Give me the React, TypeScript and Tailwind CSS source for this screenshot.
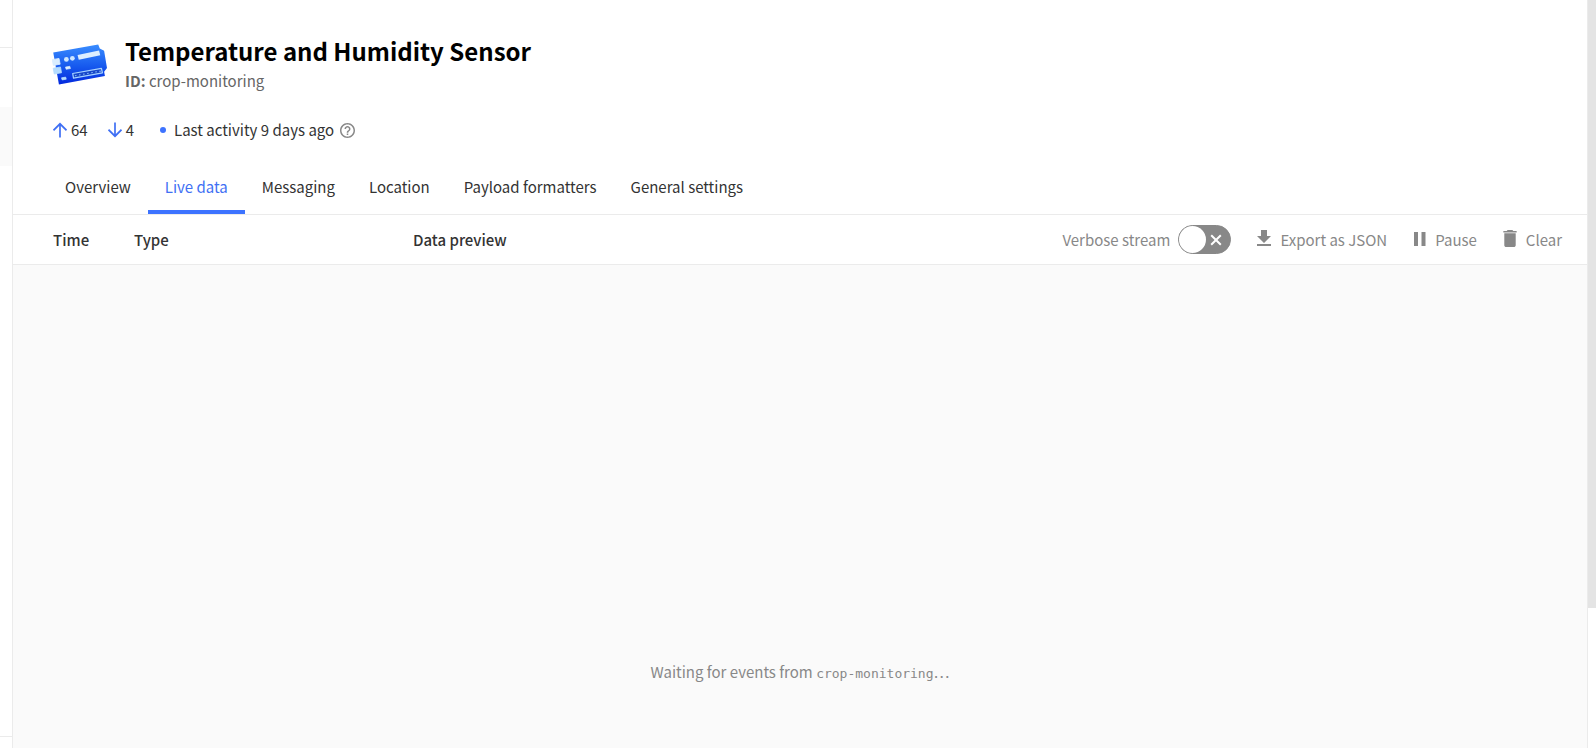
import React, { useState } from 'react';

const tabs = ['Overview', 'Live data', 'Messaging', 'Location', 'Payload formatters', 'General settings'];

function DeviceIcon() {
  return (
    <svg viewBox="0.800 0.500 53.200 39.200" className="h-[41px] w-[55px]" aria-hidden="true">
      <defs>
        <linearGradient id="board" x1="0" y1="0" x2="0" y2="1">
          <stop offset="0" stopColor="#3a8dff" />
          <stop offset="0.55" stopColor="#1659ee" />
          <stop offset="1" stopColor="#0328dd" />
        </linearGradient>
      </defs>
      <path d="M2 8.5 45.5 0.8 47 4.6 51.2 6.8 54 23.5 51.2 27.2 52 31.2 7.5 39.4z" fill="url(#board)" />
      <path d="M1 15.4l6.6-1.2 1.1 5.6L2.1 21z" fill="#d9edff" stroke="#d9edff" strokeWidth=".8" strokeLinejoin="round" />
      <path d="M2 23.7l7-1.2 1 5.600-7 1.2z" fill="#b4dcff" stroke="#b4dcff" strokeWidth=".8" strokeLinejoin="round" />
      <circle cx="14.7" cy="15.2" r="2.3" fill="#cde7ff" />
      <circle cx="20.5" cy="14.1" r="2.3" fill="#cde7ff" />
      <path d="M25.5 10.800l20.800-4.300 1.200 4.700-20.800 4.300z" fill="#dceeff" />
      <path d="M13.8 22.6l4.2-.8.7 2.2-4.2.8z" fill="#dceeff" stroke="#dceeff" strokeWidth=".6" />
      <path d="M10 33l4-.7.6 2-4 .7z" fill="#b4dcff" stroke="#b4dcff" strokeWidth=".7" />
      <path d="M20.8 28.8l27.8-4.9 1 4.2-28 5.1z" fill="#1747c9" stroke="#a6d2ff" strokeWidth="1.2" strokeLinejoin="round" />
      <path d="M23 31l25-4.5" stroke="#8bbcff" strokeWidth="1" strokeDasharray="1.5 2.5" />
    </svg>
  );
}

function ArrowIcon({ down = false }: { down?: boolean }) {
  return (
    <svg viewBox="0 0 14 16" className={down ? 'h-4 w-3.5 rotate-180' : 'h-4 w-3.5'} fill="none" stroke="#4070f4" strokeWidth="1.7" aria-hidden="true">
      <path d="M7 15.5V2M.5 8.300 7 1.8 13.500 8.300" />
    </svg>
  );
}

function Toggle() {
  const [on, setOn] = useState(false);
  return (
    <label className="flex items-center gap-2">
      Verbose stream
      <input type="checkbox" className="peer sr-only" checked={on} onChange={(e) => setOn(e.target.checked)} />
      <span className="flex h-[29px] w-[53px] items-center justify-between rounded-full border border-[#888] bg-[#888] pr-2 peer-checked:flex-row-reverse peer-checked:bg-[#3d73ff] peer-focus-visible:outline-2">
        <span className="size-[27px] rounded-full bg-white" />
        <svg viewBox="0 0 12 12" className="size-3" stroke="#fff" strokeWidth="2" aria-hidden="true">
          <path d="M1.2 1.2l9.6 9.6M10.8 1.2l-9.6 9.6" />
        </svg>
      </span>
    </label>
  );
}

export default function App() {
  const [active, setActive] = useState('Live data');
  return (
    <div className="flex h-screen bg-white font-['Noto_Sans_CJK_SC','Noto_Sans',sans-serif] text-[15px] leading-6 text-[#333]">
      <aside className="flex w-[13px] shrink-0 flex-col border-r border-[#ebebeb]">
        <div className="h-12 border-b border-[#ebebeb]" />
        <div className="mt-[59px] h-[59px] bg-[#fafafa]" />
        <div className="mt-auto h-3 border-t border-[#ebebeb]" />
      </aside>
      <main className="flex min-w-0 flex-1 flex-col border-r border-[#ebebeb]">
        <header className="px-[39px] pt-[35px]">
          <div className="flex items-center gap-[18px]">
            <DeviceIcon />
            <div>
              <h1 className="text-2xl leading-8 font-bold text-black">Temperature and Humidity Sensor</h1>
              <p className="pt-0.5 text-[#666]">
                <b>ID:</b> crop-monitoring
              </p>
            </div>
          </div>
          <div className="flex items-center pt-[25px] pl-px">
            <span className="flex items-center gap-1">
              <ArrowIcon />
              64
            </span>
            <span className="ml-5 flex items-center gap-1">
              <ArrowIcon down />
              4
            </span>
            <span className="ml-[26px] size-1.5 rounded-full bg-[#3d73ff]" />
            <span className="ml-2">Last activity 9 days ago</span>
            <svg viewBox="2 2 20 20" className="ml-1.5 size-[15px]" fill="#888" role="img" aria-label="Help">
              <path d="M11 18h2v-2h-2v2zm1-16C6.48 2 2 6.48 2 12s4.48 10 10 10 10-4.48 10-10S17.520 2 12 2zm0 18c-4.410 0-8-3.590-8-8s3.590-8 8-8 8 3.590 8 8-3.590 8-8 8zm0-14c-2.210 0-4 1.790-4 4h2c0-1.100.9-2 2-2s2 .9 2 2c0 2-3 1.750-3 5h2c0-2.250 3-2.500 3-5 0-2.210-1.790-4-4-4z" />
            </svg>
          </div>
        </header>
        <nav className="mt-[15px] flex border-b border-[#ebebeb] px-[35px]">
          {tabs.map((tab) => (
            <a
              key={tab}
              href="#"
              onClick={(e) => {
                e.preventDefault();
                setActive(tab);
              }}
              className={
                tab === active
                  ? 'border-b-4 border-[#3d73ff] px-[17px] pt-[18px] pb-[11px] text-[#4070f4]'
                  : 'border-b-4 border-transparent px-[17px] pt-[18px] pb-[11px]'
              }
            >
              {tab}
            </a>
          ))}
        </nav>
        <section className="flex min-h-0 flex-1 flex-col">
          <div className="flex h-[50px] items-center justify-between border-b border-[#ebebeb] pr-[25px] pl-10">
            <table className="table-fixed text-left">
              <thead>
                <tr>
                  <th className="w-[81px] font-medium">Time</th>
                  <th className="w-[279px] font-medium">Type</th>
                  <th className="w-40 font-medium">Data preview</th>
                </tr>
              </thead>
            </table>
            <div className="flex items-center gap-[26px] text-[#888]">
              <Toggle />
              <button type="button" className="flex items-center gap-[9px]">
                <svg viewBox="5 3 14 19" className="h-[19px] w-3.5" fill="#888" aria-hidden="true">
                  <path d="M19 9h-4V3H9v6H5l7 7 7-7zM5 17v2h14v-2H5z" />
                </svg>
                Export as JSON
              </button>
              <button type="button" className="flex items-center gap-[9px]">
                <svg viewBox="0 0 13 16" className="h-4 w-[13px]" fill="#888" aria-hidden="true">
                  <path d="M1 0h4v14H1zM8.500 0h4v14h-4z" />
                </svg>
                Pause
              </button>
              <button type="button" className="flex items-center gap-[9px]">
                <svg viewBox="5 3 14 20" className="h-[19px] w-3.5" fill="#888" aria-hidden="true">
                  <path d="M6 19c0 1.100.9 2 2 2h8c1.100 0 2-.9 2-2V6.500H6v12.500zM19 4h-3.500l-1-1h-5l-1 1H5v1.500h14V4z" />
                </svg>
                Clear
              </button>
            </div>
          </div>
          <div className="flex flex-1 items-end justify-center bg-[#fafafa] pb-[62px] text-[#888]">
            <p>
              Waiting for events from <code className="font-['DejaVu_Sans_Mono',monospace] text-[13px]">crop-monitoring</code>…
            </p>
          </div>
        </section>
      </main>
      <div className="w-2 shrink-0">
        <div className="h-[608px] bg-[#e4e4e4]" />
      </div>
    </div>
  );
}
